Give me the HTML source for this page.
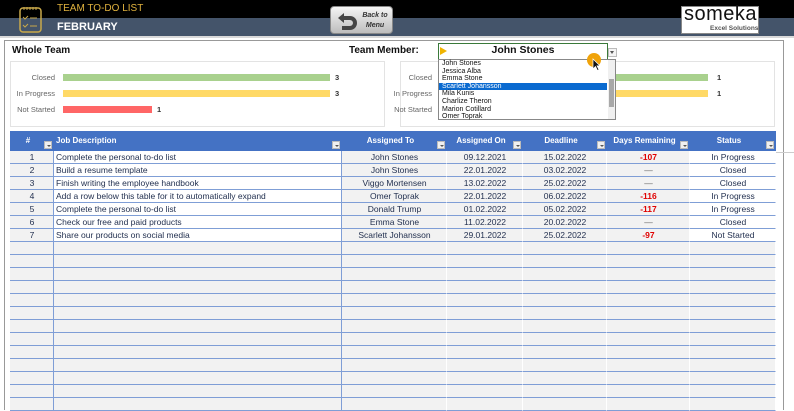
<!DOCTYPE html>
<html><head><meta charset="utf-8"><style>
*{margin:0;padding:0;box-sizing:border-box}
body{width:794px;height:407px;overflow:hidden;background:#fff;font-family:"Liberation Sans",Arial,sans-serif;position:relative}
.a{position:absolute}
.t{font-size:8.5px;color:#1f2d4d;white-space:nowrap;line-height:13px}
.c{text-align:center}
.hd{font-size:8px;font-weight:bold;color:#fff;line-height:20px;white-space:nowrap}
.fb{position:absolute;width:8px;height:8px;background:#f0f0f0;border:1px solid #bbb;top:10px}
.fb:after{content:"";position:absolute;left:1.5px;top:2.5px;border-left:2px solid transparent;border-right:2px solid transparent;border-top:2px solid #555}
.lbl{font-size:7.5px;color:#666;text-align:right;width:46px}
.dd{font-size:7px;color:#111;line-height:7.6px;padding-left:3px;white-space:nowrap;height:7.6px}
</style></head><body>
<div class="a" style="left:0;top:0;width:794px;height:18px;background:#000"></div>
<div class="a" style="left:0;top:18px;width:794px;height:18px;background:#44546a"></div>
<div class="a" style="left:0;top:36px;width:794px;height:2px;background:#d9d9d9"></div>
<svg class="a" style="left:18px;top:4px" width="26" height="30" viewBox="0 0 26 30"><rect x="2" y="4" width="21" height="24" rx="3" fill="none" stroke="#c9a94a" stroke-width="1.5"/><path d="M6 3v3M9 3v3M12 3v3M15 3v3M18 3v3" stroke="#c9a94a"/><path d="M5 13l2 2 3-3M12 14h7M5 21l2 2 3-3M12 22h7" stroke="#c9a94a" fill="none"/></svg>
<div class="a" style="left:57px;top:3px;font-size:10px;color:#e0b23e;">TEAM TO-DO LIST</div>
<div class="a" style="left:57px;top:21px;font-size:11px;color:#fff;font-weight:bold">FEBRUARY</div>
<div class="a" style="left:330px;top:6px;width:63px;height:28px;border-radius:4px;background:linear-gradient(#f4f4f4,#bdbdbd);border:1px solid #888"></div>
<svg class="a" style="left:335px;top:10px" width="24" height="22" viewBox="0 0 24 22"><path d="M9 3L3 8l6 5V10h6a3 3 0 0 1 0 6h-8v4h8a7 7 0 0 0 0-14H9z" fill="#444"/></svg>
<div class="a" style="left:358px;top:11px;width:34px;font-size:7px;font-style:italic;font-weight:bold;color:#333;text-align:center;line-height:10px">Back to<br>Menu</div>
<div class="a" style="left:681px;top:6px;width:78px;height:28px;background:#fff;border:1px solid #888"></div>
<div class="a" style="left:684px;top:3px;font-size:20px;color:#111;letter-spacing:0.5px">someka</div>
<div class="a" style="left:710px;top:25px;font-size:6.5px;color:#555;font-weight:bold">Excel Solutions</div>
<div class="a" style="left:4px;top:40px;width:780px;height:370px;border:1px solid #999;border-bottom:none"></div>
<div class="a" style="left:12px;top:45px;font-size:10px;font-weight:bold;color:#111">Whole Team</div>
<div class="a" style="left:349px;top:45px;font-size:10px;font-weight:bold;color:#111">Team Member:</div>
<div class="a" style="left:10px;top:61px;width:375px;height:66px;border:1px solid #e3e3e3"></div>
<div class="a" style="left:400px;top:61px;width:375px;height:66px;border:1px solid #e3e3e3"></div>
<div class="a lbl" style="left:9px;top:73px">Closed</div>
<div class="a lbl" style="left:9px;top:89px">In Progress</div>
<div class="a lbl" style="left:9px;top:105px">Not Started</div>
<div class="a" style="left:63px;top:74px;width:267px;height:7px;background:#a9d18e"></div>
<div class="a" style="left:63px;top:90px;width:267px;height:7px;background:#ffd966"></div>
<div class="a" style="left:63px;top:106px;width:89px;height:7px;background:#ff6666"></div>
<div class="a" style="left:335px;top:73px;font-size:7.5px;font-weight:bold;color:#333">3</div>
<div class="a" style="left:335px;top:89px;font-size:7.5px;font-weight:bold;color:#333">3</div>
<div class="a" style="left:157px;top:105px;font-size:7.5px;font-weight:bold;color:#333">1</div>
<div class="a lbl" style="left:386px;top:73px">Closed</div>
<div class="a lbl" style="left:386px;top:89px">In Progress</div>
<div class="a lbl" style="left:386px;top:105px">Not Started</div>
<div class="a" style="left:616px;top:74px;width:92px;height:7px;background:#a9d18e"></div>
<div class="a" style="left:616px;top:90px;width:92px;height:7px;background:#ffd966"></div>
<div class="a" style="left:717px;top:73px;font-size:7.5px;font-weight:bold;color:#333">1</div>
<div class="a" style="left:717px;top:89px;font-size:7.5px;font-weight:bold;color:#333">1</div>
<div class="a" style="left:438px;top:43px;width:170px;height:17px;border:1px solid #3a7a3a;background:#fff"></div>
<div class="a" style="left:440px;top:47px;width:0;height:0;border-left:7px solid #f0b400;border-top:4px solid transparent;border-bottom:4px solid transparent"></div>
<div class="a" style="left:438px;top:44px;width:170px;text-align:center;font-size:10.5px;font-weight:bold;color:#111">John Stones</div>
<div class="a" style="left:608px;top:48px;width:9px;height:9px;border:1px solid #bbb;background:#f4f4f4"></div>
<div class="a" style="left:610px;top:51px;border-left:2.5px solid transparent;border-right:2.5px solid transparent;border-top:3px solid #555"></div>
<div class="a" style="left:438px;top:59px;width:178px;height:61px;border:1px solid #888;background:#fff"></div>
<div class="a" style="left:439px;top:60px;width:168px">
<div class="dd">John Stones</div><div class="dd">Jessica Alba</div><div class="dd">Emma Stone</div>
<div class="dd" style="background:#0a6ad0;color:#fff">Scarlett Johansson</div>
<div class="dd">Mila Kunis</div><div class="dd">Charlize Theron</div><div class="dd">Marion Cotillard</div><div class="dd">Omer Toprak</div></div>
<div class="a" style="left:608px;top:60px;width:7px;height:59px;background:#f0f0f0"></div>
<div class="a" style="left:609px;top:79px;width:5px;height:28px;background:#a8a8a8"></div>
<div class="a" style="left:587px;top:53px;width:14px;height:14px;border-radius:50%;background:#f0a30a"></div>
<svg class="a" style="left:592px;top:58px" width="10" height="13" viewBox="0 0 10 13"><path d="M1 1v10l2.5-2.5 2 4 1.5-.8-2-3.8H8z" fill="#111" stroke="#fff" stroke-width=".7"/></svg>
<div class="a" style="left:10px;top:131px;width:766px;height:20px;background:#4472c4"></div>
<div class="a" style="left:776px;top:152px;width:18px;height:1px;background:#ccc"></div>
<div id="tb"></div>
<script>
var cols=[10,54,342,447,523,607,690,776];
var names=["#","Job Description","Assigned To","Assigned On","Deadline","Days Remaining","Status"];
var data=[
["1","Complete the personal to-do list","John Stones","09.12.2021","15.02.2022","-107","In Progress"],
["2","Build a resume template","John Stones","22.01.2022","03.02.2022","—","Closed"],
["3","Finish writing the employee handbook","Viggo Mortensen","13.02.2022","25.02.2022","—","Closed"],
["4","Add a row below this table for it to automatically expand","Omer Toprak","22.01.2022","06.02.2022","-116","In Progress"],
["5","Complete the personal to-do list","Donald Trump","01.02.2022","05.02.2022","-117","In Progress"],
["6","Check our free and paid products","Emma Stone","11.02.2022","20.02.2022","—","Closed"],
["7","Share our products on social media","Scarlett Johansson","29.01.2022","25.02.2022","-97","Not Started"]];
var h="";
for(var i=0;i<7;i++){var w=cols[i+1]-cols[i];
 if(i==1)h+='<div class="a hd" style="left:'+(cols[i]+2)+'px;top:131px">'+names[i]+'</div>';
 else h+='<div class="a hd c" style="left:'+cols[i]+'px;top:131px;width:'+(w-8)+'px">'+names[i]+'</div>';
 h+='<div class="fb" style="left:'+(cols[i+1]-10)+'px;top:141px"></div>';}
for(var r=0;r<20;r++){var y=151+r*13;
 for(var i=0;i<7;i++){var w=cols[i+1]-cols[i];
  var bg=(r<7&&(i==1||i==6))?"#fff":"#f2f2f2";
  h+='<div class="a" style="left:'+cols[i]+'px;top:'+y+'px;width:'+w+'px;height:13px;background:'+bg+';border-bottom:1px solid #7f9ed6;border-right:1px solid '+(i<2?'#7f9ed6':'#fff')+'"></div>';
  if(r<7){var v=data[r][i];var st=v.charAt(0)=="-"?"color:#e00000;font-weight:bold;":"";
   if(v=="—")st="color:#666;";
   if(i==1)h+='<div class="a t" style="left:'+(cols[i]+2)+'px;top:'+y+'px">'+v+'</div>';
   else h+='<div class="a t c" style="left:'+cols[i]+'px;top:'+y+'px;width:'+w+'px;'+st+'">'+v+'</div>';}
 }}
document.getElementById("tb").outerHTML=h;
</script>
</body></html>
